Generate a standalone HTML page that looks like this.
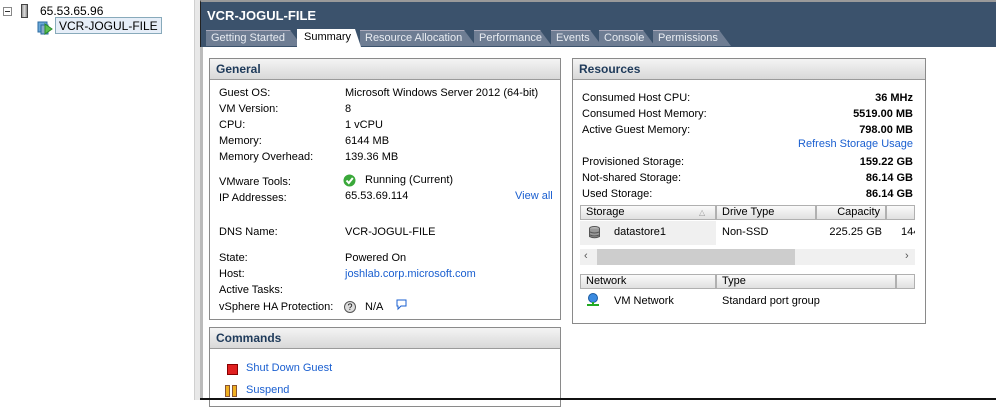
<!DOCTYPE html>
<html><head><style>
*{margin:0;padding:0;box-sizing:border-box}
body{width:996px;height:400px;overflow:hidden;background:#fff;font-family:"Liberation Sans",Tahoma,sans-serif;font-size:11px;color:#000;position:relative}
.a{position:absolute;white-space:nowrap}
.lnk{color:#1a5fd0}
.panel{position:absolute;border:1px solid #8a8a8a;background:#fff}
.ph{height:21px;background:linear-gradient(#f4f4f4,#d8d8d8);border-bottom:1px solid #9a9a9a;font-weight:bold;color:#1e3a5a;font-size:12px;padding:3px 0 0 6px}
.tab{position:absolute;top:30px;height:16px;background:#6e7d93;color:#e8ecf2;font-size:11px;padding:1px 0 0 5px;border-top:1px solid #aab;clip-path:polygon(0 0,calc(100% - 12px) 0,100% 100%,0 100%)}
.b{font-weight:bold}
.th{position:absolute;height:15px;background:linear-gradient(#fafafa,#e0e0e0);border:1px solid #b0b0b0;padding:0 0 0 5px;line-height:13px}
</style></head><body>
<div class="a" style="left:0;top:0;width:194px;height:400px;background:#fff"></div>
<div class="a" style="left:194px;top:0;width:6px;height:400px;background:#e8e8e8;border-left:1px solid #d0d0d0"></div>
<div class="a" style="left:3px;top:7px;width:9px;height:9px;border:1px solid #888;background:#fff"></div>
<div class="a" style="left:5px;top:11px;width:5px;height:1px;background:#333"></div>
<div class="a" style="left:21px;top:4px;width:7px;height:14px;background:linear-gradient(90deg,#999,#ddd,#888);border:1px solid #444"></div>
<div class="a" style="left:40px;top:4px;font-size:12px">65.53.65.96</div>
<svg class="a" style="left:37px;top:20px" width="16" height="16"><rect x="1" y="2" width="9" height="10" fill="#6aa8d8" stroke="#2a6aa0"/><rect x="4" y="5" width="7" height="9" fill="#8ac" stroke="#2a6aa0"/><path d="M8 4 L15 9 L8 14Z" fill="#5cc050" stroke="#2a8a2a"/></svg>
<div class="a" style="left:55px;top:17px;height:17px;padding:1px 3px;border:1px solid #8ab;background:#e6eef8;font-size:12px">VCR-JOGUL-FILE</div>
<div class="a" style="left:200px;top:0;width:796px;height:47px;background:#3b526c;border-top:2px solid #9a9a9a;border-left:1px solid #222"></div>
<div class="a b" style="left:207px;top:8px;color:#fff;font-size:13px">VCR-JOGUL-FILE</div>
<div class="tab" style="left:206px;width:96px">Getting Started</div>
<div class="tab" style="left:360px;width:116px">Resource Allocation</div>
<div class="tab" style="left:474px;width:78px">Performance</div>
<div class="tab" style="left:551px;width:51px">Events</div>
<div class="tab" style="left:599px;width:56px">Console</div>
<div class="tab" style="left:653px;width:78px">Permissions</div>
<div class="a" style="left:297px;top:29px;width:60px;height:18px;background:#fff;padding:2px 0 0 7px;clip-path:polygon(0 0,calc(100% - 6px) 0,100% 100%,0 100%);width:64px">Summary</div>
<div class="a" style="left:200px;top:47px;width:3px;height:353px;background:#bbb"></div>
<div class="panel" style="left:209px;top:58px;width:352px;height:262px"><div class="ph">General</div></div>
<div class="a" style="left:219px;top:85px;line-height:16px">Guest OS:<br>VM Version:<br>CPU:<br>Memory:<br>Memory Overhead:</div>
<div class="a" style="left:345px;top:85px;line-height:16px">Microsoft Windows Server 2012 (64-bit)<br>8<br>1 vCPU<br>6144 MB<br>139.36 MB</div>
<div class="a" style="left:219px;top:174px;line-height:16px">VMware Tools:<br>IP Addresses:</div>
<svg class="a" style="left:343px;top:174px" width="13" height="13"><circle cx="6.5" cy="6.5" r="6" fill="#3aa83a"/><path d="M3.5 6.5 L5.8 9 L9.8 4" stroke="#fff" stroke-width="2" fill="none"/></svg>
<div class="a" style="left:365px;top:174px">Running (Current)</div>
<div class="a" style="left:345px;top:190px">65.53.69.114</div>
<div class="a lnk" style="left:515px;top:190px">View all</div>
<div class="a" style="left:219px;top:226px">DNS Name:</div>
<div class="a" style="left:345px;top:226px">VCR-JOGUL-FILE</div>
<div class="a" style="left:219px;top:250px;line-height:16px">State:<br>Host:<br>Active Tasks:</div>
<div class="a" style="left:345px;top:250px;line-height:16px">Powered On<br><span class="lnk">joshlab.corp.microsoft.com</span></div>
<div class="a" style="left:219px;top:301px">vSphere HA Protection:</div>
<div class="a" style="left:344px;top:301px;width:12px;height:12px;border:1px solid #555;border-radius:50%;font-size:9px;text-align:center;line-height:10px;background:#ddd">?</div>
<div class="a" style="left:365px;top:301px">N/A</div>
<svg class="a" style="left:396px;top:299px" width="12" height="12"><path d="M1 1H10V7H5L2 10V7H1Z" fill="none" stroke="#1a5fd0"/></svg>
<div class="panel" style="left:209px;top:327px;width:352px;height:80px"><div class="ph">Commands</div></div>
<div class="a" style="left:227px;top:364px;width:11px;height:11px;background:#e02020;border:1px solid #800"></div>
<div class="a lnk" style="left:246px;top:362px">Shut Down Guest</div>
<div class="a" style="left:225px;top:385px;width:5px;height:12px;background:#f0b020;border:1px solid #853"></div>
<div class="a" style="left:232px;top:385px;width:5px;height:12px;background:#f0b020;border:1px solid #853"></div>
<div class="a lnk" style="left:246px;top:384px">Suspend</div>
<div class="panel" style="left:572px;top:58px;width:354px;height:266px"><div class="ph">Resources</div></div>
<div class="a" style="left:582px;top:90px;line-height:16px">Consumed Host CPU:<br>Consumed Host Memory:<br>Active Guest Memory:</div>
<div class="a b" style="left:780px;top:90px;width:133px;text-align:right;line-height:16px">36 MHz<br>5519.00 MB<br>798.00 MB</div>
<div class="a lnk" style="left:780px;top:138px;width:133px;text-align:right">Refresh Storage Usage</div>
<div class="a" style="left:582px;top:154px;line-height:16px">Provisioned Storage:<br>Not-shared Storage:<br>Used Storage:</div>
<div class="a b" style="left:780px;top:154px;width:133px;text-align:right;line-height:16px">159.22 GB<br>86.14 GB<br>86.14 GB</div>
<div class="th" style="left:580px;top:205px;width:136px">Storage<span style="position:absolute;left:118px;color:#999;font-size:8px">△</span></div>
<div class="th" style="left:716px;top:205px;width:100px">Drive Type</div>
<div class="th" style="left:816px;top:205px;width:70px;text-align:right;padding-right:5px">Capacity</div>
<div class="th" style="left:886px;top:205px;width:29px"></div>
<div class="a" style="left:580px;top:221px;width:136px;height:24px;background:#f0f0f0"></div>
<svg class="a" style="left:589px;top:226px" width="11" height="13"><ellipse cx="5.5" cy="2.5" rx="5" ry="2" fill="#bbb" stroke="#555"/><path d="M0.5 2.5V10.5Q5.5 13 10.5 10.5V2.5" fill="#999" stroke="#555"/><path d="M1 6Q5.5 8 10 6M1 9Q5.5 11 10 9" stroke="#555" fill="none"/></svg>
<div class="a" style="left:614px;top:226px">datastore1</div>
<div class="a" style="left:722px;top:226px">Non-SSD</div>
<div class="a" style="left:790px;top:226px;width:92px;text-align:right">225.25 GB</div>
<div class="a" style="left:901px;top:226px;width:14px;overflow:hidden">144</div>
<div class="a" style="left:580px;top:249px;width:335px;height:16px;background:#f0f0f0"></div>
<div class="a" style="left:597px;top:249px;width:198px;height:16px;background:#cdcdcd"></div>
<div class="a" style="left:584px;top:250px;color:#555">&lsaquo;</div>
<div class="a" style="left:905px;top:250px;color:#555">&rsaquo;</div>
<div class="th" style="left:580px;top:274px;width:136px">Network</div>
<div class="th" style="left:716px;top:274px;width:180px">Type</div>
<div class="th" style="left:896px;top:274px;width:19px"></div>
<svg class="a" style="left:586px;top:293px" width="14" height="14"><circle cx="7" cy="5" r="4.5" fill="#3a8ae0" stroke="#1a5aa0"/><rect x="6" y="9" width="2" height="2" fill="#2a2"/><rect x="1" y="11" width="12" height="2" fill="#2a2"/></svg>
<div class="a" style="left:614px;top:295px">VM Network</div>
<div class="a" style="left:722px;top:295px">Standard port group</div>
<div class="a" style="left:200px;top:398px;width:796px;height:2px;background:#111"></div>
</body></html>
